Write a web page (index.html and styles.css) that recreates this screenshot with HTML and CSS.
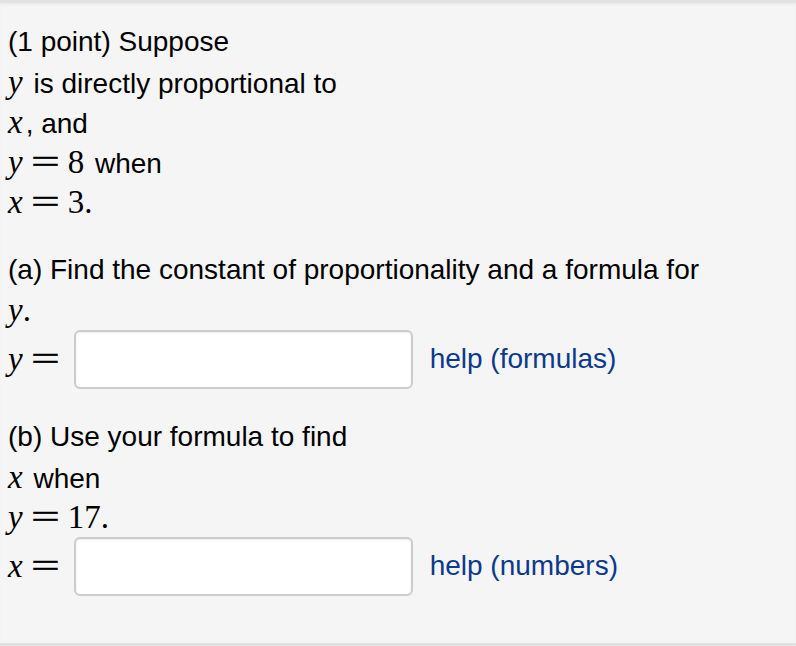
FILE: index.html
```html
<!DOCTYPE html>
<html>
<head>
<meta charset="utf-8">
<link rel="stylesheet" href="styles.css">
</head>
<body>
<div class="problem">
  <div class="para">
    <div class="line">(1 point) Suppose</div>
    <div class="line"><span class="m mi">y</span> is directly proportional to</div>
    <div class="line"><span class="m mi">x</span>, and</div>
    <div class="line"><span class="m"><span class="mi">y</span><span class="mo"><span class="eq">=</span></span>8</span> when</div>
    <div class="line"><span class="m"><span class="mi">x</span><span class="mo"><span class="eq">=</span></span>3.</span></div>
  </div>
  <div class="para">
    <div class="line">(a) Find the constant of proportionality and a formula for</div>
    <div class="line"><span class="m"><span class="mi">y</span>.</span></div>
    <div class="answer">
      <span class="m"><span class="mi">y</span><span class="mo"><span class="eq">=</span></span></span>
      <input class="box" type="text">
      <a class="help" href="#">help (formulas)</a>
    </div>
  </div>
  <div class="para">
    <div class="line">(b) Use your formula to find</div>
    <div class="line"><span class="m mi">x</span> when</div>
    <div class="line"><span class="m"><span class="mi">y</span><span class="mo"><span class="eq">=</span></span>17.</span></div>
    <div class="answer">
      <span class="m"><span class="mi">x</span><span class="mo"><span class="eq">=</span></span></span>
      <input class="box" type="text">
      <a class="help" href="#">help (numbers)</a>
    </div>
  </div>
</div>
</body>
</html>
```
FILE: styles.css
```css
html, body {
  margin: 0;
  padding: 0;
  height: 100%;
}
body {
  background: #f5f5f5;
  font-family: "Liberation Sans", Arial, Helvetica, sans-serif;
  font-size: 28px;
  color: #000;
}
.problem {
  box-sizing: border-box;
  height: 646px;
  border-top: 3px solid #e2e2e2;
  border-bottom: 3px solid #e0e0e0;
  box-shadow: inset 0 2px 2px rgba(0,0,0,0.04);
  padding: 19px 8px 0 8px;
}
.para {
  margin-bottom: 28px;
}
.line {
  height: 40px;
  line-height: 40px;
  white-space: nowrap;
}
.m {
  font-family: "Liberation Serif", "Times New Roman", serif;
  font-size: 33px;
  margin-right: 3px;
}
.mi {
  font-style: italic;
}
.mo {
  display: inline-block;
  width: 45px;
  text-align: center;
}
.eq {
  display: inline-block;
  transform: scaleX(1.55);
  -webkit-text-stroke: 0.4px #000;
}
.answer {
  display: flex;
  align-items: center;
  height: 60px;
  margin-top: -1px;
}
.answer .m {
  margin-right: 0;
}
.box {
  box-sizing: border-box;
  width: 339px;
  height: 59px;
  margin: 0 17px 0 6px;
  border: 2px solid #cccccc;
  border-radius: 6px;
  background: #fff;
  box-shadow: inset 0 1px 2px rgba(0,0,0,0.08);
  padding: 0;
}
.help {
  color: #0b3a8c;
  text-decoration: none;
}
```
